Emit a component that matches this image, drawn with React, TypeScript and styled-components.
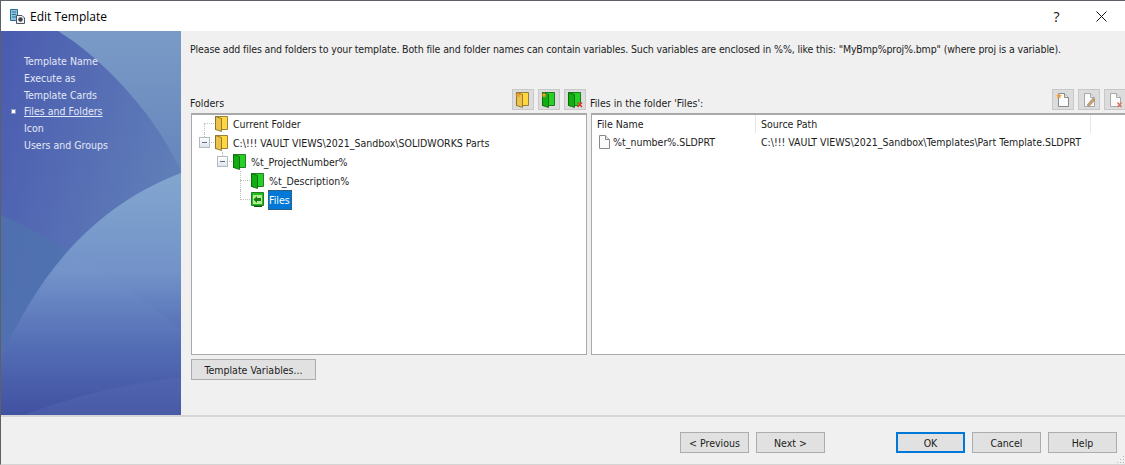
import React from "react";
import styled, { createGlobalStyle } from "styled-components";

const Global = createGlobalStyle`
  html, body {
    margin: 0;
    padding: 0;
    background: #f0f0f0;
  }
  body {
    font-family: "DejaVu Sans Condensed", "DejaVu Sans", sans-serif;
    font-stretch: condensed;
    font-size: 10.5px;
    color: #1c1c1c;
  }
`;

const Window = styled.div`
  width: 1125px;
  height: 465px;
  display: flex;
  flex-direction: column;
  overflow: hidden;
  box-sizing: border-box;
  border-top: 1px solid #5c6067;
  border-left: 1px solid #5c6067;
  border-bottom: 1px solid #d4d4d4;
  background: #f0f0f0;
`;

const TitleBar = styled.div`
  height: 30px;
  flex: none;
  background: #fff;
  display: flex;
  align-items: center;
  padding: 0 1px 0 8px;
  gap: 4px;
`;

const TitleText = styled.div`
  font-family: "Open Sans", sans-serif;
  font-stretch: normal;
  font-size: 12px;
  color: #000;
  flex: 1;
`;

const TitleActions = styled.div`
  display: flex;
`;

const TitleAction = styled.div`
  width: 45px;
  height: 30px;
  display: flex;
  align-items: center;
  justify-content: center;
  font-family: "Open Sans", sans-serif;
  font-stretch: normal;
  font-size: 14px;
  color: #111;
`;

const Body = styled.div`
  height: 384px;
  flex: none;
  display: flex;
`;

const Sidebar = styled.nav`
  width: 180px;
  flex: none;
  position: relative;
  overflow: hidden;
  background: #4c60b2;
`;

const SidebarArt = styled.svg`
  position: absolute;
  inset: 0;
`;

const NavList = styled.div`
  position: relative;
  display: flex;
  flex-direction: column;
  padding: 22px 0 0 23px;
`;

const NavItem = styled.div<{ $active?: boolean }>`
  height: 16.8px;
  line-height: 16.8px;
  color: #e3e8f6;
  position: relative;
  text-decoration: ${(p) => (p.$active ? "underline" : "none")};
  ${(p) =>
    p.$active &&
    `&::before {
      content: "";
      position: absolute;
      left: -13px;
      top: 6px;
      width: 3px;
      height: 3px;
      background: #fff;
      border: 1px solid #8d98c8;
    }`}
`;

const Main = styled.main`
  flex: 1;
  min-width: 0;
  overflow: hidden;
  padding: 10px 0 0 10px;
  display: flex;
  flex-direction: column;
`;

const Intro = styled.div`
  height: 16px;
  line-height: 16px;
  margin-left: -1px;
  white-space: nowrap;
  letter-spacing: -0.13px;
`;

const Panes = styled.div`
  margin-top: 32px;
  display: flex;
  gap: 4px;
`;

const Pane = styled.section<{ $w: number }>`
  width: ${(p) => p.$w}px;
  flex: none;
`;

const PaneHead = styled.div`
  height: 24px;
  display: flex;
  align-items: flex-start;
  justify-content: space-between;
`;

const PaneLabel = styled.div`
  margin: 6px 0 0 -1px;
  line-height: 16px;
`;

const Toolbar = styled.div<{ $end?: number }>`
  display: flex;
  gap: 4px;
  padding-right: ${(p) => p.$end ?? 0}px;
`;

const ToolButton = styled.div`
  width: 22px;
  height: 21px;
  box-sizing: border-box;
  background: #dcdcdc;
  border: 1px solid #c8c8c8;
  display: flex;
  align-items: center;
  justify-content: center;
`;

const Box = styled.div`
  height: 242px;
  box-sizing: border-box;
  background: #fff;
  border: 1px solid #a9a9a9;
  border-top-width: 2px;
  overflow: hidden;
`;

const Tree = styled.div`
  margin-top: -1px;
  padding: 0 0 0 4px;
`;

const TreeRow = styled.div<{ $depth: number }>`
  height: 19px;
  display: flex;
  align-items: center;
  padding-left: ${(p) => p.$depth * 18}px;
`;

const Elbow = styled.span<{ $up?: boolean; $down?: boolean }>`
  width: 18px;
  height: 19px;
  flex: none;
  position: relative;
  &::before {
    content: "";
    position: absolute;
    left: 8px;
    top: ${(p) => (p.$up ? 0 : 9)}px;
    bottom: ${(p) => (p.$down ? 0 : 9)}px;
    border-left: 1px dotted #c2c2c2;
  }
  &::after {
    content: "";
    position: absolute;
    left: 8px;
    right: 0;
    top: 9px;
    border-top: 1px dotted #c2c2c2;
  }
`;

const Minus = styled.span`
  position: absolute;
  z-index: 1;
  left: 3px;
  top: 4px;
  width: 9px;
  height: 9px;
  background: linear-gradient(#fff, #dfe3ea);
  border: 1px solid #b4bac2;
  &::after {
    content: "";
    position: absolute;
    left: 2px;
    right: 2px;
    top: 4px;
    height: 1px;
    background: #5a6a80;
  }
`;

const IconSlot = styled.span`
  width: 19px;
  flex: none;
  display: flex;
  align-items: center;
`;

const NodeLabel = styled.span<{ $selected?: boolean }>`
  line-height: 18px;
  white-space: nowrap;
  ${(p) =>
    p.$selected &&
    `background: #0078d7;
     color: #fff;
     height: 20px;
     line-height: 20px;
     padding: 0 2px 0 1px;
     margin-left: -1px;
     outline: 1px dotted #5c4a30;
     outline-offset: -1px;`}
`;

const Columns = styled.div`
  display: grid;
  grid-template-columns: 164px 335px;
`;

const HeaderCell = styled.div`
  height: 18px;
  line-height: 18px;
  padding-left: 5px;
  border-right: 1px solid #e6e6e6;
  box-sizing: border-box;
`;

const Cell = styled.div`
  height: 18px;
  line-height: 18px;
  padding-left: 5px;
  display: flex;
  align-items: center;
  gap: 2px;
  white-space: nowrap;
`;

const Button = styled.button<{ $primary?: boolean }>`
  height: 21px;
  box-sizing: border-box;
  padding: 0;
  background: #e1e1e1;
  border: ${(p) => (p.$primary ? "2px solid #0078d7" : "1px solid #adadad")};
  font: inherit;
  color: #1c1c1c;
  width: 69px;
`;

const VariablesButton = styled(Button)`
  width: 125px;
  margin-top: 4px;
`;

const Footer = styled.footer`
  flex: 1;
  position: relative;
  border-top: 2px solid #d6d6d6;
  display: flex;
  justify-content: flex-end;
  padding: 15px 8px 0 0;
`;

const ButtonGroup = styled.div<{ $after?: number }>`
  display: flex;
  gap: 7px;
  margin-right: ${(p) => p.$after ?? 0}px;
`;

const Grip = styled.svg`
  position: absolute;
  right: 0;
  bottom: 0;
`;

const palette = {
  yellow: { door: "#ecc24a", back: "#ffd83f", line: "#7d6726" },
  green: { door: "#12ad12", back: "#26d126", line: "#0c5f0c" },
};

function Folder({ tone, children }: { tone: "yellow" | "green"; children?: React.ReactNode }) {
  const c = palette[tone];
  return (
    <svg width="16" height="18" viewBox="0 0 16 18">
      <path d="M1.5 1.5H13.5V14.5H1.5Z" fill={c.back} stroke={c.line} strokeWidth="0.8" />
      <path d="M1.5 1.5L7.5 3.5V16.5L1.5 14.5Z" fill={c.door} stroke={c.line} strokeWidth="0.8" />
      {children}
    </svg>
  );
}

function SyncFolder() {
  return (
    <svg width="16" height="18" viewBox="0 0 16 18">
      <path d="M1.5 1.5H13.5V14.5H1.5Z" fill="#1cc01c" stroke="#0f5a0f" strokeWidth="0.8" />
      <path d="M3 4H12V13H3Z" fill="#b5eb93" />
      <path d="M3.5 8.5L7 5V7H11V10H7V12Z" fill="#157f15" />
      <path d="M4 15.5H12" stroke="#0f5a0f" />
    </svg>
  );
}

function Page({ size = 14, tone = "#8a8a8a", children }: { size?: number; tone?: string; children?: React.ReactNode }) {
  return (
    <svg width={size} height={size + 2} viewBox="0 0 14 16">
      <path d="M2.5 1.5H8.5L12.5 5.5V14.5H2.5Z" fill="#fbfbfb" stroke={tone} />
      <path d="M8.5 1.5V5.5H12.5" fill="#e4e4e4" stroke={tone} />
      {children}
    </svg>
  );
}

const Spark = () => <path d="M3 1L3.8 3L6 3.4L4.2 4.6L4.8 6.6L3 5.5L1.2 6.6L1.8 4.6L0 3.4L2.2 3Z" fill="#f09a28" />;
const RedX = () => <path d="M10.5 11.5L15 16M15 11.5L10.5 16" stroke="#e03a2e" strokeWidth="1.6" />;

export default function App() {
  return (
    <>
      <Global />
      <Window>
        <TitleBar>
          <svg width="17" height="17" viewBox="0 0 17 17">
            <path d="M1.5 1.5H8.5V12.5H1.5Z" fill="#8fc6e0" stroke="#2d6f92" />
            <path d="M3 4H7M3 6.5H7M3 9H7" stroke="#2d6f92" />
            <path d="M7.5 7.5H13L15.5 10V15.5H7.5Z" fill="#eef2f4" stroke="#4b5560" />
            <circle cx="11.5" cy="11.5" r="2.2" fill="#3c4248" />
          </svg>
          <TitleText>Edit Template</TitleText>
          <TitleActions>
            <TitleAction>?</TitleAction>
            <TitleAction>
              <svg width="11" height="11" viewBox="0 0 11 11">
                <path d="M0.5 0.5L10.5 10.5M10.5 0.5L0.5 10.5" stroke="#111" strokeWidth="1" />
              </svg>
            </TitleAction>
          </TitleActions>
        </TitleBar>

        <Body>
          <Sidebar>
            <SidebarArt width="180" height="384" viewBox="0 0 180 384">
              <defs>
                <linearGradient id="base" x1="0" y1="0" x2="1" y2="0.6">
                  <stop offset="0" stopColor="#4a5bb0" />
                  <stop offset="1" stopColor="#6383b9" />
                </linearGradient>
                <linearGradient id="corner" x1="0" y1="0" x2="0" y2="1">
                  <stop offset="0" stopColor="#7a9bc7" />
                  <stop offset="1" stopColor="#6685bc" />
                </linearGradient>
                <linearGradient id="arc" x1="0" y1="0" x2="0" y2="1">
                  <stop offset="0" stopColor="#82a6cf" />
                  <stop offset="0.4" stopColor="#7393c9" />
                  <stop offset="0.72" stopColor="#4f68b1" />
                  <stop offset="1" stopColor="#3a499b" />
                </linearGradient>
              </defs>
              <rect width="180" height="384" fill="url(#base)" />
              <path d="M57 0C105 30 155 85 180 140V0Z" fill="url(#corner)" />
              <path d="M0 184C30 197 50 210 71 222C110 245 150 275 180 299V384H0Z" fill="#4f73ad" opacity="0.75" />
              <path d="M0 327C30 260 80 180 180 142V384H0Z" fill="url(#arc)" />
              <path d="M71 222C110 245 150 275 180 299V384H0V327C15 290 40 255 71 222Z" fill="#7f9cd8" opacity="0.1" />
              <path d="M23 384C70 365 130 352 180 346V384Z" fill="#5a6cb4" opacity="0.35" />
            </SidebarArt>
            <NavList>
              <NavItem>Template Name</NavItem>
              <NavItem>Execute as</NavItem>
              <NavItem>Template Cards</NavItem>
              <NavItem $active>Files and Folders</NavItem>
              <NavItem>Icon</NavItem>
              <NavItem>Users and Groups</NavItem>
            </NavList>
          </Sidebar>

          <Main>
            <Intro>
              Please add files and folders to your template. Both file and folder names can contain variables. Such
              variables are enclosed in %%, like this: "MyBmp%proj%.bmp" (where proj is a variable).
            </Intro>
            <Panes>
              <Pane $w={396}>
                <PaneHead>
                  <PaneLabel>Folders</PaneLabel>
                  <Toolbar $end={1}>
                    <ToolButton>
                      <Folder tone="yellow">
                        <Spark />
                      </Folder>
                    </ToolButton>
                    <ToolButton>
                      <Folder tone="green">
                        <Spark />
                      </Folder>
                    </ToolButton>
                    <ToolButton>
                      <Folder tone="green">
                        <RedX />
                      </Folder>
                    </ToolButton>
                  </Toolbar>
                </PaneHead>
                <Box>
                  <Tree>
                    <TreeRow $depth={0}>
                      <Elbow $down />
                      <IconSlot>
                        <Folder tone="yellow" />
                      </IconSlot>
                      <NodeLabel>Current Folder</NodeLabel>
                    </TreeRow>
                    <TreeRow $depth={0}>
                      <Elbow $up>
                        <Minus />
                      </Elbow>
                      <IconSlot>
                        <Folder tone="yellow" />
                      </IconSlot>
                      <NodeLabel>C:\!!! VAULT VIEWS\2021_Sandbox\SOLIDWORKS Parts</NodeLabel>
                    </TreeRow>
                    <TreeRow $depth={1}>
                      <Elbow $up>
                        <Minus />
                      </Elbow>
                      <IconSlot>
                        <Folder tone="green" />
                      </IconSlot>
                      <NodeLabel>%t_ProjectNumber%</NodeLabel>
                    </TreeRow>
                    <TreeRow $depth={2}>
                      <Elbow $up $down />
                      <IconSlot>
                        <Folder tone="green" />
                      </IconSlot>
                      <NodeLabel>%t_Description%</NodeLabel>
                    </TreeRow>
                    <TreeRow $depth={2}>
                      <Elbow $up />
                      <IconSlot>
                        <SyncFolder />
                      </IconSlot>
                      <NodeLabel $selected>Files</NodeLabel>
                    </TreeRow>
                  </Tree>
                </Box>
                <VariablesButton>Template Variables...</VariablesButton>
              </Pane>
              <Pane $w={535}>
                <PaneHead>
                  <PaneLabel>Files in the folder 'Files':</PaneLabel>
                  <Toolbar>
                    <ToolButton>
                      <Page>
                        <Spark />
                      </Page>
                    </ToolButton>
                    <ToolButton>
                      <Page tone="#a8a8a8">
                        <path d="M5 13L11 6L13 8L7 14.5Z" fill="#c9a06a" stroke="#9a8a80" strokeWidth="0.6" />
                      </Page>
                    </ToolButton>
                    <ToolButton>
                      <Page tone="#a8a8a8">
                        <path d="M9.5 10.5L13.5 15M13.5 10.5L9.5 15" stroke="#e0705f" strokeWidth="1.5" />
                      </Page>
                    </ToolButton>
                  </Toolbar>
                </PaneHead>
                <Box>
                  <Columns>
                    <HeaderCell>File Name</HeaderCell>
                    <HeaderCell>Source Path</HeaderCell>
                    <Cell>
                      <Page />
                      %t_number%.SLDPRT
                    </Cell>
                    <Cell>C:\!!! VAULT VIEWS\2021_Sandbox\Templates\Part Template.SLDPRT</Cell>
                  </Columns>
                </Box>
              </Pane>
            </Panes>
          </Main>
        </Body>

        <Footer>
          <ButtonGroup $after={71}>
            <Button>&lt; Previous</Button>
            <Button>Next &gt;</Button>
          </ButtonGroup>
          <ButtonGroup>
            <Button $primary>OK</Button>
            <Button>Cancel</Button>
            <Button>Help</Button>
          </ButtonGroup>
          <Grip width="10" height="10" viewBox="0 0 10 10">
            <path d="M8 2h1v1H8zM5 5h1v1H5zM8 5h1v1H8zM2 8h1v1H2zM5 8h1v1H5zM8 8h1v1H8z" fill="#b5b5b5" />
          </Grip>
        </Footer>
      </Window>
    </>
  );
}
